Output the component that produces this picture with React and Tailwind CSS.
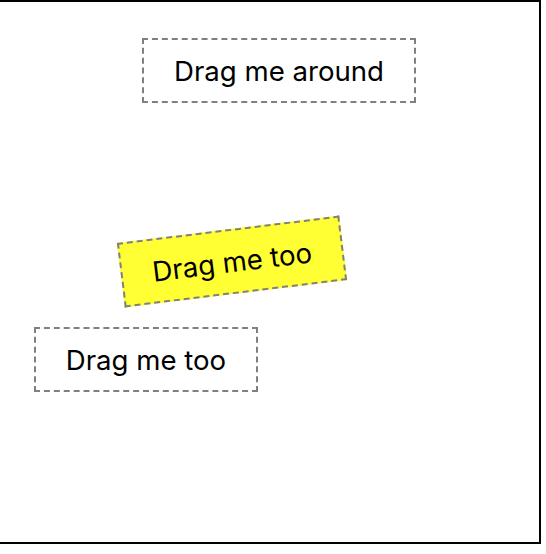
const font = { fontFamily: 'Inter, "Noto Sans", sans-serif' };

function Draggable({ className = '', children }) {
  return (
    <div
      className={`absolute flex items-center justify-center border-2 border-dashed border-[#808080] pt-[3px] text-[27.6px] leading-none text-black select-none ${className}`}
    >
      {children}
    </div>
  );
}

export default function App() {
  return (
    <div className="h-[554px] w-[546px] overflow-hidden bg-white" style={font}>
      <div className="relative -ml-[2px] h-[544px] w-[543px] border-2 border-black">
        <Draggable className="left-[142px] top-[36px] h-[65px] w-[274px]">Drag me around</Draggable>
        <Draggable className="left-[120px] top-[227px] h-[65px] w-[224px] -rotate-[7deg] bg-[#ffff33]">Drag me too</Draggable>
        <Draggable className="left-[34px] top-[325px] h-[65px] w-[224px]">Drag me too</Draggable>
      </div>
    </div>
  );
}
